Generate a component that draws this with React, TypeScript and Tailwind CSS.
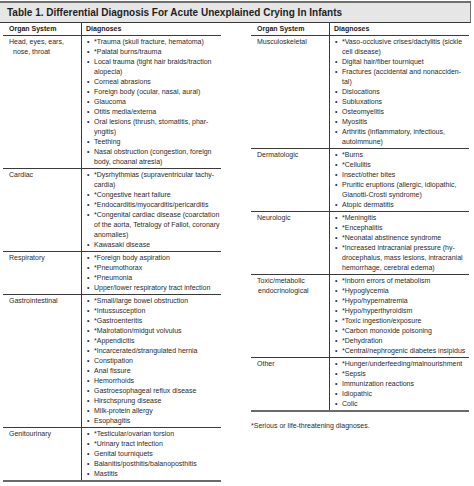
import React from "react";

type Row = { organ: string[]; items: string[][] };

const left: Row[] = [
  {
    organ: ["Head, eyes, ears,", "nose, throat"],
    items: [
      ["*Trauma (skull fracture, hematoma)"],
      ["*Palatal burns/trauma"],
      ["Local trauma (tight hair braids/traction", "alopecia)"],
      ["Corneal abrasions"],
      ["Foreign body (ocular, nasal, aural)"],
      ["Glaucoma"],
      ["Otitis media/externa"],
      ["Oral lesions (thrush, stomatitis, phar-", "yngitis)"],
      ["Teething"],
      ["Nasal obstruction (congestion, foreign", "body, choanal atresia)"],
    ],
  },
  {
    organ: ["Cardiac"],
    items: [
      ["*Dysrhythmias (supraventricular tachy-", "cardia)"],
      ["*Congestive heart failure"],
      ["*Endocarditis/myocarditis/pericarditis"],
      [
        "*Congenital cardiac disease (coarctation",
        "of the aorta, Tetralogy of Fallot, coronary",
        "anomalies)",
      ],
      ["Kawasaki disease"],
    ],
  },
  {
    organ: ["Respiratory"],
    items: [
      ["*Foreign body aspiration"],
      ["*Pneumothorax"],
      ["*Pneumonia"],
      ["Upper/lower respiratory tract infection"],
    ],
  },
  {
    organ: ["Gastrointestinal"],
    items: [
      ["*Small/large bowel obstruction"],
      ["*Intussusception"],
      ["*Gastroenteritis"],
      ["*Malrotation/midgut volvulus"],
      ["*Appendicitis"],
      ["*Incarcerated/strangulated hernia"],
      ["Constipation"],
      ["Anal fissure"],
      ["Hemorrhoids"],
      ["Gastroesophageal reflux disease"],
      ["Hirschsprung disease"],
      ["Milk-protein allergy"],
      ["Esophagitis"],
    ],
  },
  {
    organ: ["Genitourinary"],
    items: [
      ["*Testicular/ovarian torsion"],
      ["*Urinary tract infection"],
      ["Genital tourniquets"],
      ["Balanitis/posthitis/balanoposthitis"],
      ["Mastitis"],
    ],
  },
];

const right: Row[] = [
  {
    organ: ["Musculoskeletal"],
    items: [
      ["*Vaso-occlusive crises/dactylitis (sickle", "cell disease)"],
      ["Digital hair/fiber tourniquet"],
      ["Fractures (accidental and nonacciden-", "tal)"],
      ["Dislocations"],
      ["Subluxations"],
      ["Osteomyelitis"],
      ["Myositis"],
      ["Arthritis (inflammatory, infectious,", "autoimmune)"],
    ],
  },
  {
    organ: ["Dermatologic"],
    items: [
      ["*Burns"],
      ["*Cellulitis"],
      ["Insect/other bites"],
      ["Pruritic eruptions (allergic, idiopathic,", "Gianotti-Crosti syndrome)"],
      ["Atopic dermatitis"],
    ],
  },
  {
    organ: ["Neurologic"],
    items: [
      ["*Meningitis"],
      ["*Encephalitis"],
      ["*Neonatal abstinence syndrome"],
      [
        "*Increased intracranial pressure (hy-",
        "drocephalus, mass lesions, intracranial",
        "hemorrhage, cerebral edema)",
      ],
    ],
  },
  {
    organ: ["Toxic/metabolic", "endocrinological"],
    items: [
      ["*Inborn errors of metabolism"],
      ["*Hypoglycemia"],
      ["*Hypo/hypernatremia"],
      ["*Hypo/hyperthyroidism"],
      ["*Toxic ingestion/exposure"],
      ["*Carbon monoxide poisoning"],
      ["*Dehydration"],
      ["*Central/nephrogenic diabetes insipidus"],
    ],
  },
  {
    organ: ["Other"],
    items: [
      ["*Hunger/underfeeding/malnourishment"],
      ["*Sepsis"],
      ["Immunization reactions"],
      ["Idiopathic"],
      ["Colic"],
    ],
  },
];

function Table({ rows, indent }: { rows: Row[]; indent: string }) {
  return (
    <div className="w-[218px] text-[7px] leading-[10px] text-[#2a2a2a]">
      <div className="flex h-[13px] border-b border-[#3a3a3a] font-bold text-[#1a1a1a]">
        <div className="w-[78px] pl-[6px] flex items-center">Organ System</div>
        <div className="flex-1 border-l border-[#3a3a3a] pl-[4px] flex items-center">
          Diagnoses
        </div>
      </div>
      {rows.map((r, i) => {
        const last = i === rows.length - 1;
        return (
          <div
            key={i}
            className={
              last
                ? "flex border-b-2 border-[#6a6a6a]"
                : "flex border-b border-[#3a3a3a]"
            }
          >
            <div className="w-[78px] pl-[6px] py-[1px]">
              {r.organ.map((o, j) => (
                <div key={j} className={j > 0 ? indent : ""}>
                  {o}
                </div>
              ))}
            </div>
            <div className="flex-1 border-l border-[#3a3a3a] pl-[5px] py-[1px]">
              {r.items.map((it, j) => (
                <div key={j} className="flex whitespace-nowrap">
                  <span className="w-[7px] shrink-0">•</span>
                  <span>
                    {it.map((l, k) => (
                      <div key={k}>{l}</div>
                    ))}
                  </span>
                </div>
              ))}
            </div>
          </div>
        );
      })}
    </div>
  );
}

export default function App() {
  return (
    <div
      className="w-[474px] h-[486px] bg-white overflow-hidden"
      style={{ fontFamily: '"Liberation Sans", Arial, sans-serif' }}
    >
      <div className="mt-[1px] w-[471px] h-[22px] border-t-2 border-b border-r border-t-[#707070] border-b-[#3a3a3a] border-r-[#707070] bg-[#e6e6e6] pl-[7px] flex items-center text-[10px] font-bold text-[#1e1e1e]">
        Table 1. Differential Diagnosis For Acute Unexplained Crying In Infants
      </div>
      <div className="flex pl-[3px] gap-[30px]">
        <Table rows={left} indent="pl-[4px]" />
        <div>
          <Table rows={right} indent="pl-[1px]" />
          <div className="mt-[9px] text-[7px] leading-[10px] text-[#2a2a2a]">
            *Serious or life-threatening diagnoses.
          </div>
        </div>
      </div>
    </div>
  );
}
